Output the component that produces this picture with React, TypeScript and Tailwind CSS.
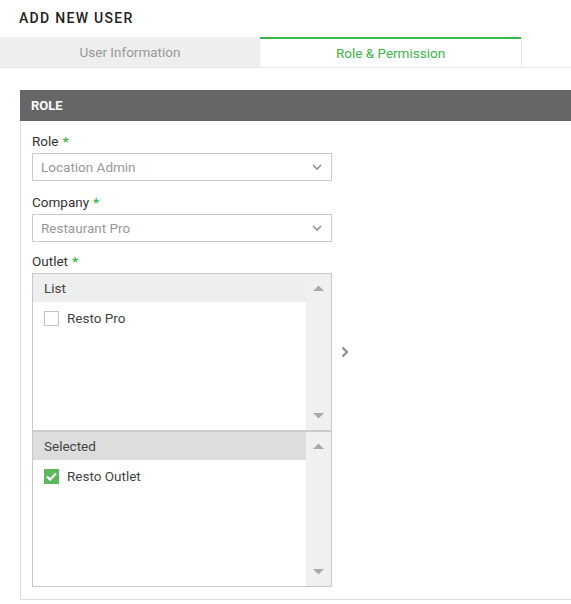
import React from 'react';

const Chevron = ({ className }: { className?: string }) => (
  <svg width="10" height="6" viewBox="0 0 10 6" className={className}>
    <path d="M1 1l4 4 4-4" fill="none" stroke="#8a8a8a" strokeWidth="1.5" />
  </svg>
);

const ArrowUp = () => (
  <svg width="11" height="6" viewBox="0 0 11 6">
    <path d="M0 6L5.5 0.5 11 6z" fill="#a9a9a9" />
  </svg>
);

const ArrowDown = () => (
  <svg width="11" height="6" viewBox="0 0 11 6">
    <path d="M0 0l5.5 5.5L11 0z" fill="#a9a9a9" />
  </svg>
);

const Label = ({ text, className }: { text: string; className?: string }) => (
  <div className={`h-[20px] flex items-center text-[13.5px] text-[#333] ${className ?? ''}`}>
    {text}
    <span className="text-[#3cb54a] ml-[4px] font-bold">*</span>
  </div>
);

const Select = ({ value }: { value: string }) => (
  <div className="mt-[2px] w-[300px] h-[28px] border border-[#cccccc] flex items-center justify-between pl-[8px] pr-[9px]">
    <span className="text-[13.5px] text-[#999]">{value}</span>
    <Chevron />
  </div>
);

const ListSection = ({
  title,
  headerBg,
  item,
  checked,
  className,
}: {
  title: string;
  headerBg: string;
  item: string;
  checked: boolean;
  className?: string;
}) => (
  <div className={`flex h-[156px] ${className ?? ''}`}>
    <div className="flex-1 flex flex-col">
      <div className={`h-[28px] flex items-center pl-[11px] text-[13.5px] text-[#444] ${headerBg}`}>{title}</div>
      <div className="flex items-center pl-[11px] mt-[8px] h-[17px]">
        {checked ? (
          <span className="w-[15px] h-[15px] bg-[#5cb85c] flex items-center justify-center">
            <svg width="11" height="9" viewBox="0 0 11 9">
              <path d="M1 4.5l3 3 6-6" fill="none" stroke="#fff" strokeWidth="2.2" />
            </svg>
          </span>
        ) : (
          <span className="w-[15px] h-[15px] border border-[#c4c4c4] bg-white" />
        )}
        <span className="ml-[8px] text-[13.5px] text-[#444]">{item}</span>
      </div>
    </div>
    <div className="w-[25px] bg-[#f0f0f0] flex flex-col items-center justify-between pt-[11px] pb-[11px]">
      <ArrowUp />
      <ArrowDown />
    </div>
  </div>
);

export default function App() {
  return (
    <div className="w-[571px] h-[604px] bg-white overflow-hidden font-['Roboto',sans-serif]">
      <div className="h-[37px] flex items-center pl-[19px] text-[14px] font-medium tracking-[1.3px] text-[#222]">
        ADD NEW USER
      </div>
      <div className="flex h-[31px] border-b border-[#e6e6e6]">
        <div className="w-[260px] bg-[#eeeeee] flex items-center justify-center text-[13.5px] text-[#999]">
          User Information
        </div>
        <div className="w-[261px] border-t-2 border-[#3cb54a] bg-white flex items-center justify-center text-[13.5px] text-[#3cb54a]">
          Role &amp; Permission
        </div>
        <div className="flex-1 border-l border-[#e6e6e6]" />
      </div>
      <div className="ml-[20px] mt-[22px]">
        <div className="h-[31px] bg-[#666666] flex items-center pl-[11px] text-[13px] font-bold text-white">ROLE</div>
        <div className="border-l border-b border-[#dddddd] pl-[11px] pt-[10px] pb-[12px]">
          <Label text="Role" />
          <Select value="Location Admin" />
          <Label text="Company" className="mt-[11px]" />
          <Select value="Restaurant Pro" />
          <Label text="Outlet" className="mt-[9px]" />
          <div className="mt-[2px] flex items-start">
            <div className="w-[300px] border border-[#c8c8c8]">
              <ListSection title="List" headerBg="bg-[#eeeeee]" item="Resto Pro" checked={false} />
              <ListSection
                title="Selected"
                headerBg="bg-[#dddddd]"
                item="Resto Outlet"
                checked
                className="border-t-2 border-[#cccccc]"
              />
            </div>
            <div className="h-[157px] flex items-center pl-[9px]">
              <svg width="8" height="12" viewBox="0 0 8 12">
                <path d="M1.5 1.5l4.5 4.5-4.5 4.5" fill="none" stroke="#888" strokeWidth="2" />
              </svg>
            </div>
          </div>
        </div>
      </div>
    </div>
  );
}
